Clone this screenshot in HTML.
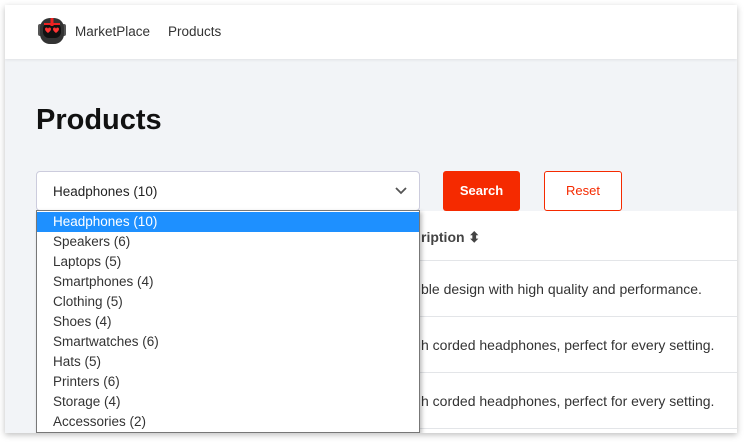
<!DOCTYPE html>
<html><head><style>
*{margin:0;padding:0;box-sizing:border-box}
body{width:752px;height:448px;background:#fff;font-family:"Liberation Sans",sans-serif;position:relative;overflow:hidden}
#frame{position:absolute;left:5px;top:5px;width:732px;height:428px;background:#f2f4f7;box-shadow:0 2px 6px rgba(0,0,0,.25);overflow:hidden}
#hdr{position:absolute;left:0;top:0;width:732px;height:54px;background:#fff;box-shadow:0 1px 3px rgba(0,0,0,.08)}
.nav{position:absolute;top:19px;font-size:13.5px;color:#333}
h1{position:absolute;left:31px;top:99px;font-size:29px;font-weight:bold;color:#111}
#sel{position:absolute;left:31px;top:166px;width:384px;height:40px;background:#fff;border:1px solid #ccd;border-radius:4px;font-size:13.5px;color:#222;padding:12px 16px}
#btn1{position:absolute;left:438px;top:166px;width:77px;height:40px;background:#f52a00;border-radius:3px;color:#fff;font-weight:bold;font-size:13px;text-align:center;line-height:40px}
#btn2{position:absolute;left:539px;top:166px;width:78px;height:40px;background:#fff;border:1px solid #f52a00;border-radius:3px;color:#f52a00;font-size:13px;text-align:center;line-height:38px}
#tbl{position:absolute;left:31px;top:206px;width:701px;height:230px;background:#fff}
.row{position:absolute;left:0;width:701px;border-top:1px solid #e3e5e8}
.txt{position:absolute;left:385px;font-size:14px;color:#333;white-space:nowrap}
#dd{position:absolute;left:31px;top:205px;width:384px;height:223px;background:#fff;border:1px solid #777;font-size:13.5px;color:#333;padding-top:1px;box-shadow:2px 2px 4px rgba(0,0,0,.25)}
#dd div{height:20px;line-height:20px;padding-left:16px}
#dd .on{background:#1e90ff;color:#fff}
</style></head><body>
<div id="frame">
<div id="hdr">
<svg style="position:absolute;left:31px;top:10px" width="32" height="32" viewBox="0 0 32 32">
<rect x="2" y="9" width="4" height="12" rx="2" fill="#555"/><rect x="26" y="9" width="4" height="12" rx="2" fill="#555"/>
<rect x="4" y="3" width="24" height="26" rx="10" fill="#333"/>
<rect x="7" y="8" width="18" height="15" rx="6" fill="#111"/>
<rect x="14.5" y="3" width="3" height="8" fill="#e22"/><rect x="8" y="8" width="16" height="2" fill="#e22"/>
<path d="M9 14c0-2 3-2 3 0 0-2 3-2 3 0 0 2-3 4-3 4s-3-2-3-4zM17 14c0-2 3-2 3 0 0-2 3-2 3 0 0 2-3 4-3 4s-3-2-3-4z" fill="#f33"/>
</svg>
<span class="nav" style="left:70px">MarketPlace</span>
<span class="nav" style="left:163px">Products</span>
</div>
<h1>Products</h1>
<div id="sel">Headphones (10)
<svg style="position:absolute;right:12px;top:15px" width="12" height="8" viewBox="0 0 12 8"><path d="M1 1l5 5 5-5" stroke="#555" stroke-width="1.8" fill="none"/></svg></div>
<div id="btn1">Search</div>
<div id="btn2">Reset</div>
<div id="tbl">
<span class="txt" style="top:18px;font-weight:bold;color:#444">ription ⬍</span>
<div class="row" style="top:49px"></div>
<span class="txt" style="top:70px">ble design with high quality and performance.</span>
<div class="row" style="top:105px"></div>
<span class="txt" style="top:126px">h corded headphones, perfect for every setting.</span>
<div class="row" style="top:161px"></div>
<span class="txt" style="top:182px">h corded headphones, perfect for every setting.</span>
<div class="row" style="top:217px"></div>
</div>
<div id="dd">
<div class="on">Headphones (10)</div><div>Speakers (6)</div><div>Laptops (5)</div><div>Smartphones (4)</div><div>Clothing (5)</div><div>Shoes (4)</div><div>Smartwatches (6)</div><div>Hats (5)</div><div>Printers (6)</div><div>Storage (4)</div><div>Accessories (2)</div>
</div>
</div>
</body></html>
